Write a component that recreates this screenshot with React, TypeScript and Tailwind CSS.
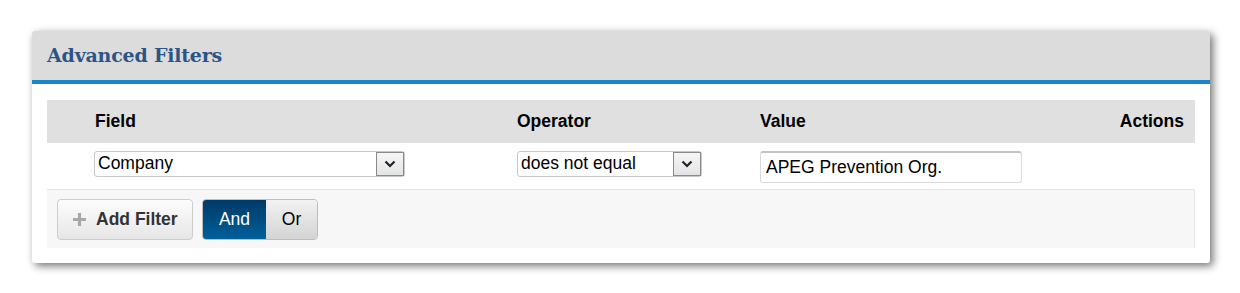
function Chevron() {
  return (
    <svg width="12" height="8" viewBox="0 0 12 8" className="block">
      <path d="M1.5 1.5 L6 6 L10.5 1.5" fill="none" stroke="#1c2430" strokeWidth="2.2" />
    </svg>
  );
}

function Select({ value, width }: { value: string; width: number }) {
  return (
    <div
      className="flex h-[26px] items-stretch rounded-[3px] border border-[#c9c9c9] bg-white"
      style={{ width }}
    >
      <div className="flex-1 pl-[3px] text-[17.5px] leading-[23px] text-black">{value}</div>
      <div className="flex w-[28px] items-center justify-center border border-[#8a8a8a] bg-gradient-to-b from-[#f6f6f6] to-[#e4e4e4]">
        <Chevron />
      </div>
    </div>
  );
}

export default function App() {
  return (
    <div className="h-[293px] w-[1240px] bg-white pl-[32px] pt-[31px] font-['Liberation_Sans',Arial,sans-serif]">
      <div className="h-[232px] w-[1178px] overflow-hidden rounded-[3px] bg-white shadow-[3px_3px_8px_rgba(0,0,0,0.55)]">
        <div className="flex h-[53px] items-center border-b-4 border-[#1a87cc] bg-[#dcdcdc] pb-[1px] pl-[15px]">
          <h1 className="font-['DejaVu_Serif',serif] text-[19px] font-bold tracking-[-0.2px] text-[#2c5585]">
            Advanced Filters
          </h1>
        </div>
        <div className="px-[15px] pt-[16px]">
          <div className="flex h-[43px] items-center bg-[#e0e0e0] text-[17.5px] font-bold text-black">
            <div className="w-[48px]" />
            <div className="w-[422px]">Field</div>
            <div className="w-[243px]">Operator</div>
            <div className="flex-1">Value</div>
            <div className="pr-[11px]">Actions</div>
          </div>
          <div className="flex h-[47px] items-start border-b border-[#e4e4e4] pt-[8px]">
            <div className="w-[47px]" />
            <div className="w-[423px]">
              <Select value="Company" width={311} />
            </div>
            <div className="w-[243px]">
              <Select value="does not equal" width={185} />
            </div>
            <div className="flex h-[32px] w-[262px] items-center rounded-[3px] border border-t-2 border-[#dadada] border-t-[#c4c4c4] bg-white pl-[5px] text-[17.5px] text-black">
              APEG Prevention Org.
            </div>
          </div>
          <div className="flex h-[58px] items-start gap-[9px] border-r border-[#e6e6e6] bg-[#f7f7f7] pl-[10px] pt-[9px]">
            <button
              type="button"
              className="flex h-[41px] w-[136px] items-center gap-[9px] rounded-[4px] border border-[#cdcdcd] bg-gradient-to-b from-[#fdfdfd] to-[#e6e6e6] pl-[14px] text-[17.5px] font-bold text-[#333]"
            >
              <svg width="15" height="15" viewBox="0 0 15 15">
                <path d="M7.5 1 V14 M1 7.5 H14" stroke="#a8a8a8" strokeWidth="3.2" />
              </svg>
              Add Filter
            </button>
            <div className="flex h-[41px] overflow-hidden rounded-[4px] border border-[#bdbdbd] text-[17.5px]">
              <div className="flex w-[63px] items-center justify-center bg-gradient-to-b from-[#003a68] to-[#00609a] text-white">
                And
              </div>
              <div className="flex w-[51px] items-center justify-center bg-gradient-to-b from-[#f2f2f2] to-[#d4d4d4] text-black">
                Or
              </div>
            </div>
          </div>
        </div>
      </div>
    </div>
  );
}
